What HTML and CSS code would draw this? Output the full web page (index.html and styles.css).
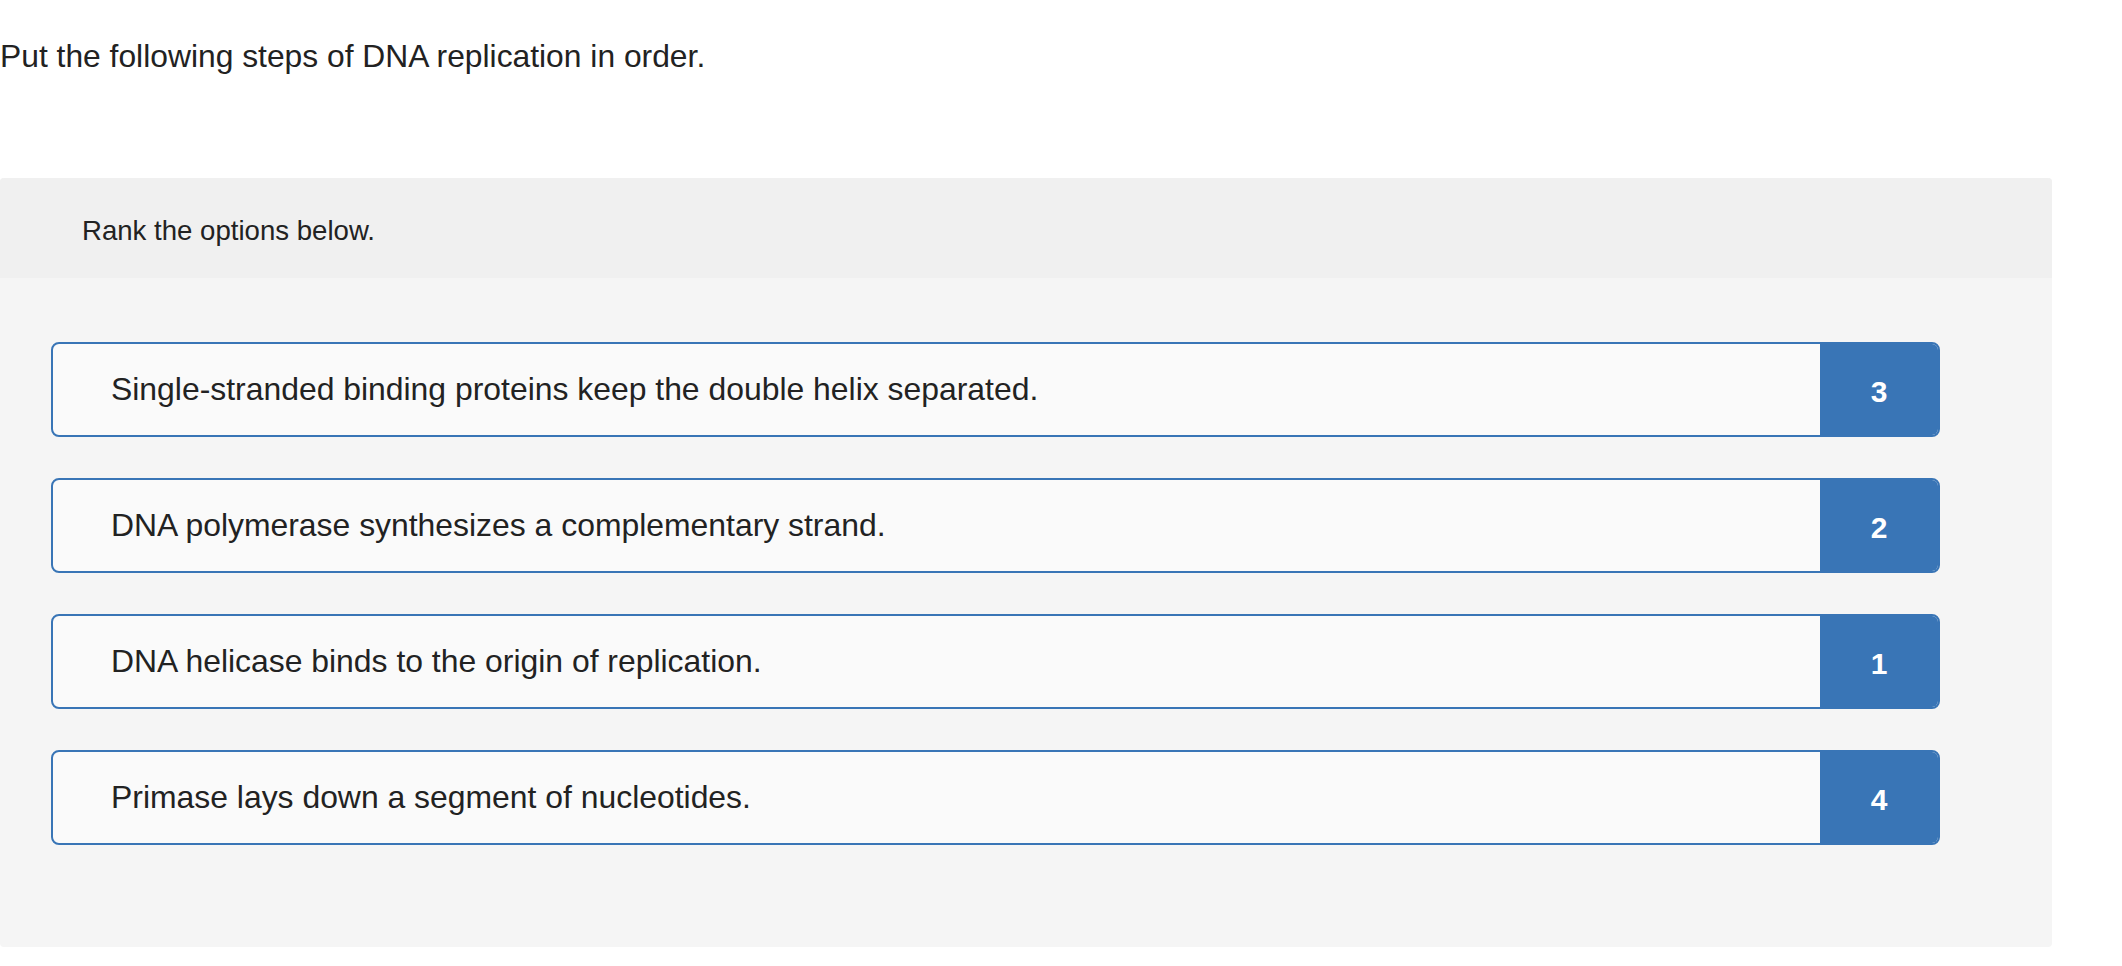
FILE: index.html
```html
<!DOCTYPE html>
<html lang="en">
<head>
<meta charset="utf-8">
<title>Rank DNA replication steps</title>
<link rel="stylesheet" href="styles.css">
</head>
<body>
  <div class="page">
    <p class="prompt">Put the following steps of DNA replication in order.</p>
    <section class="panel">
      <div class="panel-head">Rank the options below.</div>
      <div class="panel-body">
        <div class="option">
          <div class="option-text">Single-stranded binding proteins keep the double helix separated.</div>
          <div class="option-rank">3</div>
        </div>
        <div class="option">
          <div class="option-text">DNA polymerase synthesizes a complementary strand.</div>
          <div class="option-rank">2</div>
        </div>
        <div class="option">
          <div class="option-text">DNA helicase binds to the origin of replication.</div>
          <div class="option-rank">1</div>
        </div>
        <div class="option">
          <div class="option-text">Primase lays down a segment of nucleotides.</div>
          <div class="option-rank">4</div>
        </div>
      </div>
    </section>
  </div>
</body>
</html>
```
FILE: styles.css
```css
html, body {
  margin: 0;
  padding: 0;
  background: #ffffff;
}

body {
  font-family: "Liberation Sans", Arial, sans-serif;
  color: #222222;
}

.page {
  width: 2052px;
  padding-top: 38px;
}

.prompt {
  margin: 0 0 104px 0;
  font-size: 31.8px;
  line-height: 36px;
  color: #222222;
}

.panel {
  border-radius: 4px;
  overflow: hidden;
  background: #f5f5f5;
}

.panel-head {
  background: #f0f0f0;
  height: 100px;
  box-sizing: border-box;
  padding: 37px 0 0 82px;
  font-size: 27.6px;
  line-height: 32px;
  color: #222222;
}

.panel-body {
  padding: 64px 112px 102px 51px;
  display: flex;
  flex-direction: column;
  gap: 41px;
}

.option {
  display: flex;
  height: 95px;
  box-sizing: border-box;
  border: 2px solid #3975b6;
  border-radius: 8px;
  overflow: hidden;
  background: #fafafa;
}

.option-text {
  flex: 1;
  padding: 26px 0 0 58px;
  font-size: 31.9px;
  line-height: 38px;
  color: #222222;
}

.option-rank {
  width: 118px;
  background: #3975b6;
  color: #ffffff;
  font-weight: bold;
  font-size: 30px;
  display: flex;
  align-items: center;
  justify-content: center;
  padding-top: 4px;
  box-sizing: border-box;
}
```
